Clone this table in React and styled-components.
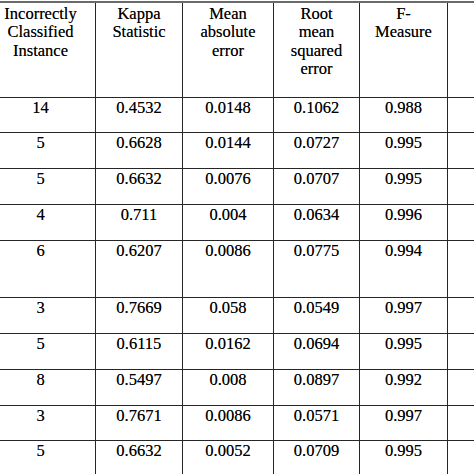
import React from "react";
import styled, { createGlobalStyle } from "styled-components";

const GlobalStyle = createGlobalStyle`
  html, body {
    margin: 0;
    padding: 0;
    background: #fff;
  }
  body {
    width: 474px;
    height: 474px;
    overflow: hidden;
  }
`;

const Page = styled.div`
  width: 474px;
  height: 474px;
  overflow: hidden;
  background: #fff;
`;

const Table = styled.table`
  margin-left: -15px;
  margin-top: 1px;
  width: 540px;
  border-collapse: collapse;
  table-layout: fixed;
  font-family: "Liberation Serif", "Times New Roman", serif;
  font-size: 16.5px;
  line-height: 18.6px;
  color: #000;
  text-shadow: 0 0 0.4px rgba(0, 0, 0, 0.6);
`;

const HeadRow = styled.tr`
  height: 95px;
`;

const Row = styled.tr`
  height: ${(p) => (p.$tall ? "57.5px" : "35.8px")};
`;

const Cell = styled.td`
  border: 1.5px solid #262626;
  border-left-color: ${(p) => (p.$first ? "transparent" : "#262626")};
  padding: 1px 2px 0;
  text-align: center;
  vertical-align: top;
`;

const HeadCell = styled(Cell).attrs({ as: "th" })`
  font-weight: normal;
  border-top: 2px solid #6a6a6a;
  padding-top: 1.5px;
`;

const headers = [
  ["Incorrectly", "Classified", "Instance"],
  ["Kappa", "Statistic"],
  ["Mean", "absolute", "error"],
  ["Root", "mean", "squared", "error"],
  ["F-", "Measure"],
  [],
];

const rows = [
  ["14", "0.4532", "0.0148", "0.1062", "0.988"],
  ["5", "0.6628", "0.0144", "0.0727", "0.995"],
  ["5", "0.6632", "0.0076", "0.0707", "0.995"],
  ["4", "0.711", "0.004", "0.0634", "0.996"],
  ["6", "0.6207", "0.0086", "0.0775", "0.994"],
  ["3", "0.7669", "0.058", "0.0549", "0.997"],
  ["5", "0.6115", "0.0162", "0.0694", "0.995"],
  ["8", "0.5497", "0.008", "0.0897", "0.992"],
  ["3", "0.7671", "0.0086", "0.0571", "0.997"],
  ["5", "0.6632", "0.0052", "0.0709", "0.995"],
];

const widths = [110, 87, 91, 86, 88, 78];

export default function App() {
  return (
    <Page>
      <GlobalStyle />
      <Table>
        <colgroup>
          {widths.map((w, i) => (
            <col key={i} style={{ width: w }} />
          ))}
        </colgroup>
        <thead>
          <HeadRow>
            {headers.map((lines, i) => (
              <HeadCell key={i} $first={i === 0}>
                {lines.map((l, j) => (
                  <React.Fragment key={j}>
                    {l}
                    {j < lines.length - 1 && <br />}
                  </React.Fragment>
                ))}
              </HeadCell>
            ))}
          </HeadRow>
        </thead>
        <tbody>
          {rows.map((r, i) => (
            <Row key={i} $tall={i === 4}>
              {r.map((v, j) => (
                <Cell key={j} $first={j === 0}>
                  {v}
                </Cell>
              ))}
              <Cell />
            </Row>
          ))}
        </tbody>
      </Table>
    </Page>
  );
}
